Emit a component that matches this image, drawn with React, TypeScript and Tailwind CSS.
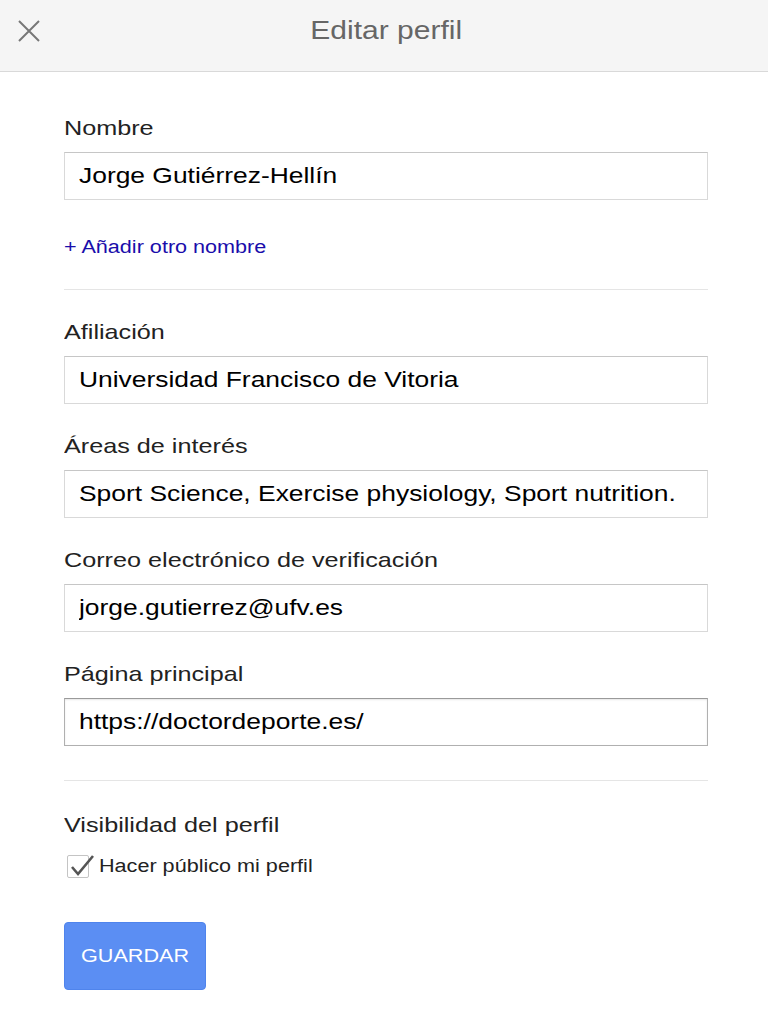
import React, { useState } from 'react';

const Stretch: React.FC<{ children: React.ReactNode; className?: string }> = ({ children, className = '' }) => (
  <span className={`inline-block origin-left scale-x-[1.2] whitespace-nowrap ${className}`}>{children}</span>
);

const Field: React.FC<{ label: string; value: string; active?: boolean }> = ({ label, value, active }) => {
  const [val, setVal] = useState(value);
  return (
    <div>
      <label className="block text-[21px] leading-[24px] text-[#222] mb-[12px]"><Stretch>{label}</Stretch></label>
      <div
        className={`h-[48px] pl-[14px] flex items-center overflow-hidden bg-white border ${
          active ? 'border-[#b0b0b0] border-t-[#9a9a9a] shadow-[inset_0_1px_2px_rgba(0,0,0,0.1)]' : 'border-[#d9d9d9] border-t-[#c6c6c6]'
        }`}
      >
        <input
          value={val}
          onChange={e => setVal(e.target.value)}
          className="w-[83.3%] origin-left scale-x-[1.2] bg-transparent outline-none text-[22px] leading-[28px] text-[#000]"
        />
      </div>
    </div>
  );
};

const App: React.FC = () => {
  const [isPublic, setIsPublic] = useState(true);

  return (
    <div className="min-h-[1026px] bg-white font-['Liberation_Sans',Arial,sans-serif]">
      <div className="h-[72px] bg-[#f5f5f5] border-b border-[#d9d9d9] flex items-center relative">
        <button className="absolute left-[18px] top-[20px] w-[22px] h-[22px]">
          <svg viewBox="0 0 22 22" width="22" height="22">
            <path d="M1 1 L21 21 M21 1 L1 21" stroke="#777" strokeWidth="2" fill="none" />
          </svg>
        </button>
        <div className="flex-1 flex justify-center pl-[4px] -mt-[9px]">
          <span className="inline-block origin-center scale-x-[1.2] text-[25px] text-[#666]">Editar perfil</span>
        </div>
      </div>

      <div className="pl-[64px] pr-[60px] pt-[44px] pb-[36px]">
        <Field label="Nombre" value="Jorge Gutiérrez-Hellín" />
        <div className="mt-[35px] text-[18px] leading-[24px] text-[#1a0dab]">
          <Stretch>+ Añadir otro nombre</Stretch>
        </div>
        <div className="mt-[30px] border-t border-[#e5e5e5]" />

        <div className="mt-[30px] flex flex-col gap-[30px]">
          <Field label="Afiliación" value="Universidad Francisco de Vitoria" />
          <Field label="Áreas de interés" value="Sport Science, Exercise physiology, Sport nutrition." />
          <Field label="Correo electrónico de verificación" value="jorge.gutierrez@ufv.es" />
          <Field label="Página principal" value="https://doctordeporte.es/" active />
        </div>

        <div className="mt-[34px] border-t border-[#e5e5e5]" />

        <div className="mt-[32px] text-[21px] leading-[24px] text-[#222]">
          <Stretch>Visibilidad del perfil</Stretch>
        </div>
        <label className="mt-[17px] flex items-center cursor-pointer select-none" onClick={() => setIsPublic(!isPublic)}>
          <span className="relative ml-[3px] w-[22px] h-[23px] border border-[#c4c4c4] rounded-[2px] bg-white">
            {isPublic && (
              <svg className="absolute left-0 -top-[3px]" width="28" height="26" viewBox="0 0 28 26">
                <path d="M4 14 L10 21 L25 3" stroke="#555" strokeWidth="2.6" fill="none" strokeLinejoin="miter" />
              </svg>
            )}
          </span>
          <span className="ml-[10px] text-[18px] leading-[24px] text-[#222]">
            <Stretch>Hacer público mi perfil</Stretch>
          </span>
        </label>

        <button className="mt-[44px] w-[142px] h-[68px] rounded-[4px] bg-[#5b8ef3] border border-[#4f84ec] text-white text-[18px] flex items-center justify-center">
          <span className="inline-block origin-center scale-x-[1.2]">GUARDAR</span>
        </button>
      </div>
    </div>
  );
};

export default App;
